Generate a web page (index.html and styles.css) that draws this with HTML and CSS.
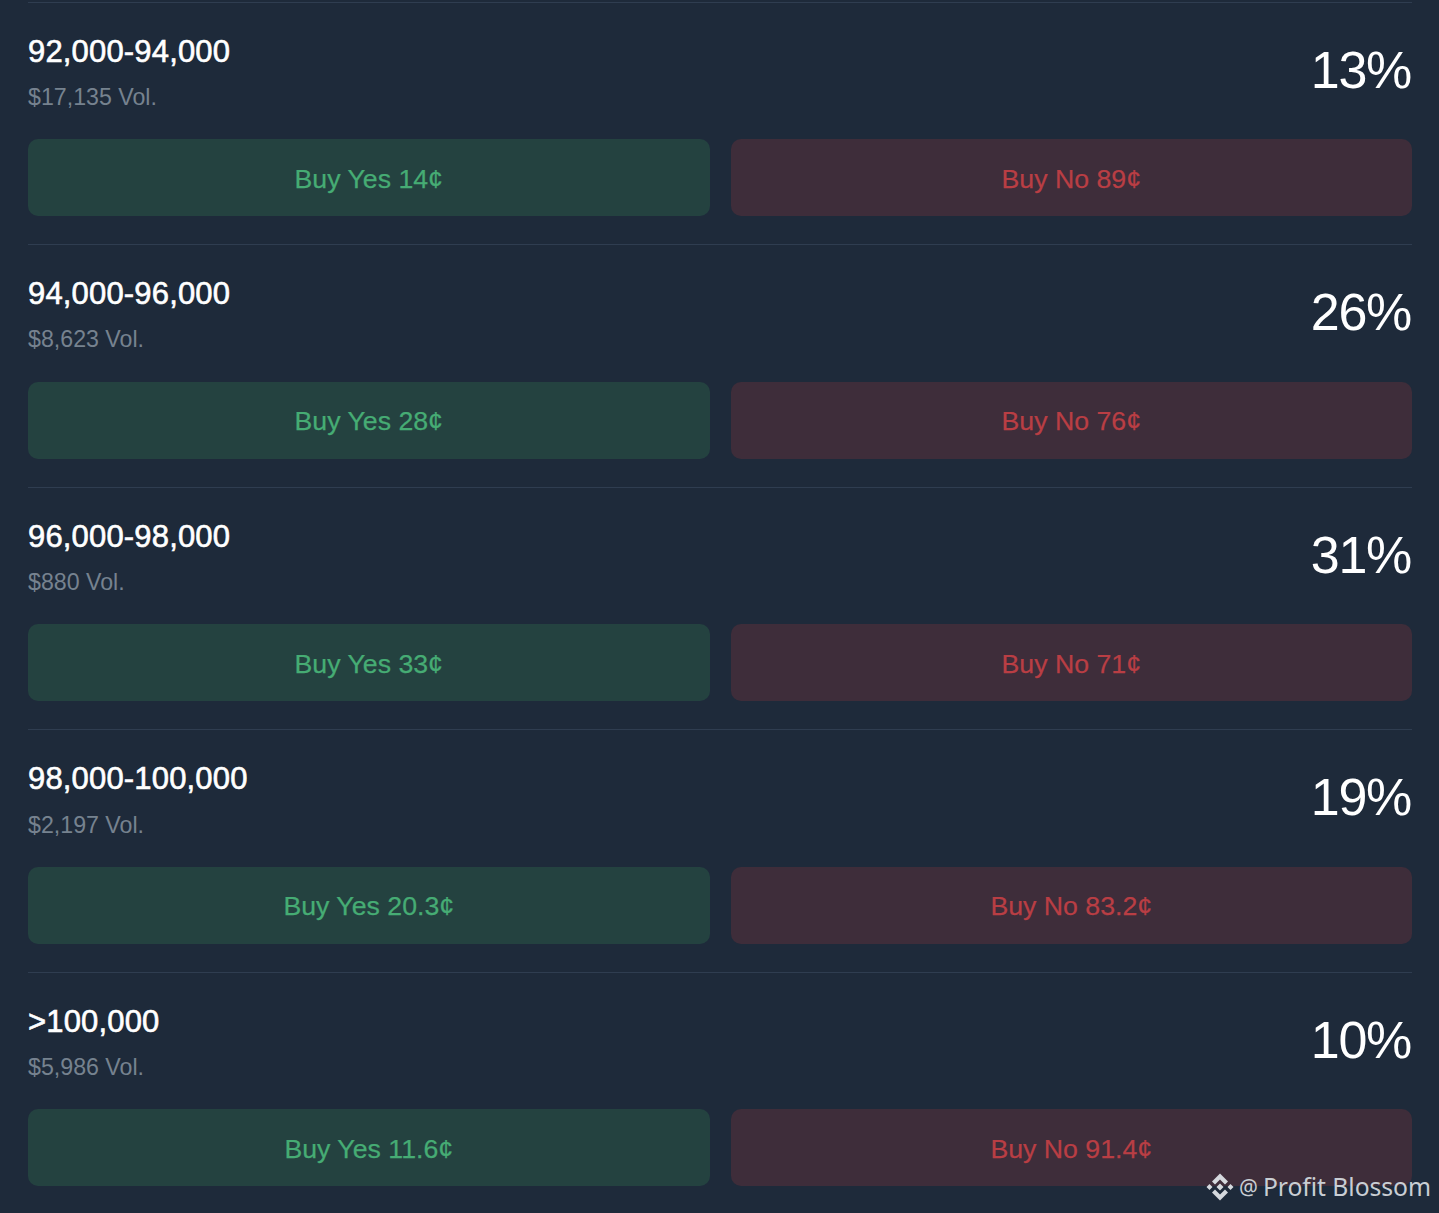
FILE: index.html
```html
<!DOCTYPE html>
<html lang="en">
<head>
<meta charset="utf-8">
<title>Outcomes</title>
<link rel="stylesheet" href="styles.css">
</head>
<body>
<main class="list">
  <section class="row">
    <div class="head"><div><h3 class="name">92,000-94,000</h3><p class="vol">$17,135 Vol.</p></div><div class="pct">13%</div></div>
    <div class="btns"><button class="btn yes">Buy Yes 14¢</button><button class="btn no">Buy No 89¢</button></div>
  </section>
  <section class="row">
    <div class="head"><div><h3 class="name">94,000-96,000</h3><p class="vol">$8,623 Vol.</p></div><div class="pct">26%</div></div>
    <div class="btns"><button class="btn yes">Buy Yes 28¢</button><button class="btn no">Buy No 76¢</button></div>
  </section>
  <section class="row">
    <div class="head"><div><h3 class="name">96,000-98,000</h3><p class="vol">$880 Vol.</p></div><div class="pct">31%</div></div>
    <div class="btns"><button class="btn yes">Buy Yes 33¢</button><button class="btn no">Buy No 71¢</button></div>
  </section>
  <section class="row">
    <div class="head"><div><h3 class="name">98,000-100,000</h3><p class="vol">$2,197 Vol.</p></div><div class="pct">19%</div></div>
    <div class="btns"><button class="btn yes">Buy Yes 20.3¢</button><button class="btn no">Buy No 83.2¢</button></div>
  </section>
  <section class="row">
    <div class="head"><div><h3 class="name">&gt;100,000</h3><p class="vol">$5,986 Vol.</p></div><div class="pct">10%</div></div>
    <div class="btns"><button class="btn yes">Buy Yes 11.6¢</button><button class="btn no">Buy No 91.4¢</button></div>
  </section>
</main>
<div class="mark">
  <svg class="mark-logo" viewBox="0 0 28 28" aria-hidden="true"><path d="M14 .5l8 8-3 3-5-5-5 5-3-3zM14 27.500l8-8-3-3-5 5-5-5-3 3zM14 10.500l3.500 3.500-3.500 3.500-3.500-3.500zM3.500 11l3 3-3 3-3-3zM24.500 11l3 3-3 3-3-3z"/></svg>
  <span class="mark-at">@</span>
  <span class="mark-name">Profit Blossom</span>
</div>
</body>
</html>
```
FILE: styles.css
```css
* { box-sizing: border-box; }
html, body { margin: 0; height: 100%; }
body {
  height: 1213px;
  overflow: hidden;
  background: #1e2a3a;
  font-family: "Liberation Sans", sans-serif;
  position: relative;
}
.list { padding: 1.5px 27px 0 28px; }
.row {
  height: 242.6px;
  border-top: 1px solid #2f3d50;
  padding-top: 31px;
}
.head { display: flex; justify-content: space-between; align-items: flex-start; height: 105.6px; }
.name { margin: 0; font-size: 31px; line-height: 36px; font-weight: 400; letter-spacing: .17px; -webkit-text-stroke: .6px #fff; color: #fff; }
.vol { margin: 13.400px 0 0; font-size: 23.200px; line-height: 28px; color: #76828f; }
.pct { font-size: 52px; line-height: 72px; color: #fff; letter-spacing: -1.3px; margin-right: 1px; }
.btns { display: grid; grid-template-columns: 1fr 1fr; gap: 21px; }
.btn {
  height: 77px;
  border: 0;
  border-radius: 10px;
  padding: 3px 0 0;
  font: 400 26.700px "Liberation Sans", sans-serif;
  -webkit-text-stroke: .25px currentColor;
}
.yes { background: #244240; color: #46ac74; }
.no { background: #3e2d3a; color: #b93e44; }
.mark {
  position: absolute;
  right: 8px;
  bottom: 10px;
  display: flex;
  align-items: center;
  gap: 5px;
  font-family: "Noto Sans", sans-serif;
  font-size: 24.700px;
  line-height: 32px;
  color: #c9ced4;
}
.mark-at { font-size: 21px; }
.mark-name { letter-spacing: -.05px; }
.mark-logo { width: 28px; height: 28px; fill: #d5d9de; }
```
